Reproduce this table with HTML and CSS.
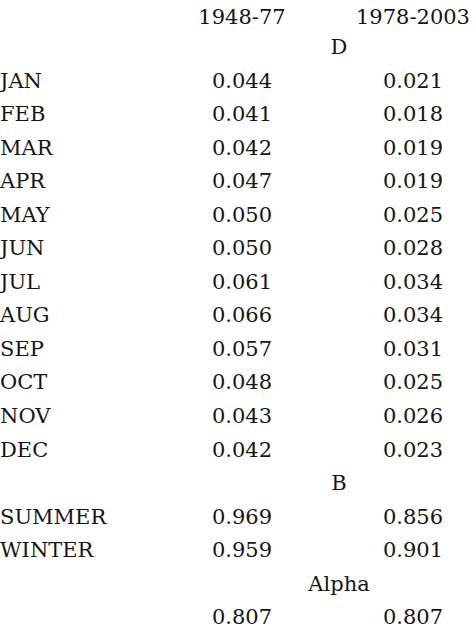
FILE: index.html
```html
<!DOCTYPE html>
<html lang="en">
<head>
<meta charset="utf-8">
<title>Table</title>
<link rel="stylesheet" href="styles.css">
</head>
<body>
<div class="page">
  <div class="table">
    <div class="row head"><span class="label"></span><span class="val">1948-77</span><span class="val">1978-2003</span></div>
    <div class="row"><span class="label"></span><span class="span">D</span></div>
    <div class="row"><span class="label">JAN</span><span class="val">0.044</span><span class="val">0.021</span></div>
    <div class="row"><span class="label">FEB</span><span class="val">0.041</span><span class="val">0.018</span></div>
    <div class="row"><span class="label">MAR</span><span class="val">0.042</span><span class="val">0.019</span></div>
    <div class="row"><span class="label">APR</span><span class="val">0.047</span><span class="val">0.019</span></div>
    <div class="row"><span class="label">MAY</span><span class="val">0.050</span><span class="val">0.025</span></div>
    <div class="row"><span class="label">JUN</span><span class="val">0.050</span><span class="val">0.028</span></div>
    <div class="row"><span class="label">JUL</span><span class="val">0.061</span><span class="val">0.034</span></div>
    <div class="row"><span class="label">AUG</span><span class="val">0.066</span><span class="val">0.034</span></div>
    <div class="row"><span class="label">SEP</span><span class="val">0.057</span><span class="val">0.031</span></div>
    <div class="row"><span class="label">OCT</span><span class="val">0.048</span><span class="val">0.025</span></div>
    <div class="row"><span class="label">NOV</span><span class="val">0.043</span><span class="val">0.026</span></div>
    <div class="row"><span class="label">DEC</span><span class="val">0.042</span><span class="val">0.023</span></div>
    <div class="row"><span class="label"></span><span class="span">B</span></div>
    <div class="row"><span class="label">SUMMER</span><span class="val">0.969</span><span class="val">0.856</span></div>
    <div class="row"><span class="label">WINTER</span><span class="val">0.959</span><span class="val">0.901</span></div>
    <div class="row"><span class="label"></span><span class="span">Alpha</span></div>
    <div class="row"><span class="label"></span><span class="val">0.807</span><span class="val">0.807</span></div>
  </div>
</div>
</body>
</html>
```

FILE: styles.css
```css
html, body {
  margin: 0;
  padding: 0;
  background: #ffffff;
  overflow: hidden;
}
.page {
  width: 474px;
  height: 631px;
  overflow: hidden;
  padding-top: 1px;
  box-sizing: border-box;
}
.table {
  width: 502px;
  font-family: "DejaVu Serif", "Liberation Serif", serif;
  font-size: 21px;
  color: #151515;
}
.row {
  display: grid;
  grid-template-columns: 160px 164px 178px;
  height: 33.56px;
  line-height: 33.56px;
  white-space: nowrap;
}
.row.head {
  height: 30px;
}
.label {
  text-align: left;
  padding-left: 0;
}
.val {
  text-align: center;
}
.span {
  grid-column: 2 / 4;
  text-align: center;
  padding-left: 16px;
}
```
